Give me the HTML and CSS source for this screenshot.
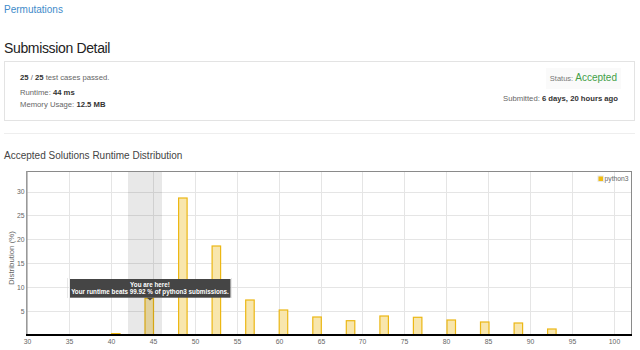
FILE: index.html
```html
<!DOCTYPE html>
<html lang="en">
<head>
    <meta charset="UTF-8">
    <title>Submission Detail - Permutations</title>
    <link rel="stylesheet" href="styles.css">
</head>
<body>
    <div class="crumb"><a href="#">Permutations</a></div>

    <h2 class="page-title">Submission Detail</h2>

    <div class="detail-card">
        <div class="detail-left">
            <p class="row"><strong>25</strong> / <strong>25</strong> test cases passed.</p>
            <p class="row spaced">Runtime: <strong>44 ms</strong></p>
            <p class="row">Memory Usage: <strong>12.5 MB</strong></p>
        </div>
        <div class="detail-right">
            <div class="status">Status: <span class="accepted">Accepted</span></div>
            <p class="row submitted">Submitted: <strong>6 days, 20 hours ago</strong></p>
        </div>
    </div>

    <div class="dist">
        <h3 class="dist-title">Accepted Solutions Runtime Distribution</h3>

        <svg class="chart" width="640" height="190" viewBox="0 161 640 190">
            <!-- grid -->
            <g class="grid">
                <line x1="27" x2="632" y1="192.5" y2="192.5"/>
                <line x1="27" x2="632" y1="215.5" y2="215.5"/>
                <line x1="27" x2="632" y1="239.5" y2="239.5"/>
                <line x1="27" x2="632" y1="263.5" y2="263.5"/>
                <line x1="27" x2="632" y1="287.5" y2="287.5"/>
                <line x1="27" x2="632" y1="311.5" y2="311.5"/>
                <line x1="69.5" x2="69.5" y1="171" y2="335"/>
                <line x1="111.5" x2="111.5" y1="171" y2="335"/>
                <line x1="153.5" x2="153.5" y1="171" y2="335"/>
                <line x1="195.5" x2="195.5" y1="171" y2="335"/>
                <line x1="237.5" x2="237.5" y1="171" y2="335"/>
                <line x1="279.5" x2="279.5" y1="171" y2="335"/>
                <line x1="321.5" x2="321.5" y1="171" y2="335"/>
                <line x1="362.5" x2="362.5" y1="171" y2="335"/>
                <line x1="404.5" x2="404.5" y1="171" y2="335"/>
                <line x1="446.5" x2="446.5" y1="171" y2="335"/>
                <line x1="488.5" x2="488.5" y1="171" y2="335"/>
                <line x1="530.5" x2="530.5" y1="171" y2="335"/>
                <line x1="572.5" x2="572.5" y1="171" y2="335"/>
                <line x1="614.5" x2="614.5" y1="171" y2="335"/>
            </g>

            <!-- bars -->
            <g class="bars">
                <rect x="111.5" y="333.6" width="8.5" height="1.4"/>
                <rect x="145" y="298.3" width="8.5" height="36.7"/>
                <rect x="178.6" y="198" width="8.5" height="137"/>
                <rect x="212.1" y="246" width="8.5" height="89"/>
                <rect x="245.7" y="300" width="8.5" height="35"/>
                <rect x="279.2" y="310" width="8.5" height="25"/>
                <rect x="312.8" y="317" width="8.5" height="18"/>
                <rect x="346.3" y="320.7" width="8.5" height="14.3"/>
                <rect x="379.9" y="316" width="8.5" height="19"/>
                <rect x="413.4" y="317.3" width="8.5" height="17.7"/>
                <rect x="447" y="320" width="8.5" height="15"/>
                <rect x="480.5" y="322" width="8.5" height="13"/>
                <rect x="514.1" y="323" width="8.5" height="12"/>
                <rect x="547.6" y="329" width="8.5" height="6"/>
            </g>

            <!-- your runtime band -->
            <rect class="band" x="128" y="171" width="34" height="164"/>

            <!-- frame -->
            <line class="frame" x1="27" x2="632" y1="171.5" y2="171.5"/>
            <line class="frame" x1="631.5" x2="631.5" y1="171" y2="335"/>
            <line class="frame-left" x1="26.8" x2="26.8" y1="171" y2="335"/>
            <line class="axis" x1="26" x2="632" y1="335" y2="335"/>

            <!-- y labels -->
            <g class="tick y-tick">
                <text x="24.5" y="194.4">30</text>
                <text x="24.5" y="218">25</text>
                <text x="24.5" y="241.8">20</text>
                <text x="24.5" y="265.7">15</text>
                <text x="24.5" y="289.6">10</text>
                <text x="24.5" y="313.6">5</text>
            </g>
            <text class="y-title" transform="translate(13.5 258) rotate(-90)">Distribution (%)</text>

            <!-- x labels -->
            <g class="tick x-tick">
                <text x="27.5" y="343.5">30</text>
                <text x="69.5" y="343.5">35</text>
                <text x="111.5" y="343.5">40</text>
                <text x="153.5" y="343.5">45</text>
                <text x="195.5" y="343.5">50</text>
                <text x="237.5" y="343.5">55</text>
                <text x="279.5" y="343.5">60</text>
                <text x="321.5" y="343.5">65</text>
                <text x="362.5" y="343.5">70</text>
                <text x="404.5" y="343.5">75</text>
                <text x="446.5" y="343.5">80</text>
                <text x="488.5" y="343.5">85</text>
                <text x="530.5" y="343.5">90</text>
                <text x="572.5" y="343.5">95</text>
                <text x="614.5" y="343.5">100</text>
            </g>

            <!-- legend -->
            <rect class="legend-box" x="597.5" y="175.5" width="6.5" height="6.5"/>
            <rect class="legend-swatch" x="598.5" y="176.5" width="4.5" height="4.5"/>
            <text class="legend-text" x="604.5" y="181">python3</text>

            <!-- tooltip -->
            <line class="tip-edge" x1="67.5" x2="67.5" y1="278" y2="298"/>
            <line class="tip-edge" x1="231.5" x2="231.5" y1="278" y2="298"/>
            <rect class="tip" x="70" y="279" width="160.5" height="18.7"/>
            <polygon class="tip" points="147,297.7 153,297.7 150,300.6"/>
            <text class="tip-text" x="150" y="286.6">You are here!</text>
            <text class="tip-text" x="150" y="294">Your runtime beats 99.92 % of python3 submissions.</text>
        </svg>
    </div>
</body>
</html>
```

FILE: styles.css
```css
:root {
    --link: #428bca;
    --green: #43a047;
    --text: #333;
    --muted: #666;
    --line: #e5e5e5;
    --bar: #ecb714;
}

* {
    margin: 0;
    padding: 0;
    box-sizing: border-box;
}

body {
    font-family: 'Liberation Sans', Arial, sans-serif;
    color: var(--text);
    background: #fff;
    padding: 3px 5px 0 4px;
    overflow: hidden;
}

.crumb {
    font-size: 10px;
    line-height: 14px;
}

.crumb a {
    color: var(--link);
    text-decoration: none;
}

.page-title {
    font-size: 14px;
    font-weight: 400;
    letter-spacing: -0.35px;
    line-height: 18px;
    color: #222;
    margin-top: 22px;
    margin-bottom: 4px;
}

.detail-card {
    display: flex;
    justify-content: space-between;
    border: 1px solid #e3e3e3;
    height: 60px;
    padding: 6px 13px 0 15px;
    font-size: 7.7px;
    color: var(--muted);
}

.detail-left {
    padding-top: 4px;
}

.row {
    line-height: 12px;
}

.row strong {
    color: var(--text);
}

.spaced {
    margin-top: 3px;
}

.detail-right {
    display: flex;
    flex-direction: column;
    align-items: flex-end;
}

.status {
    background: #fafafa;
    padding: 3px 4px;
    line-height: 14px;
    font-size: 7.5px;
    color: #777;
}

.accepted {
    color: var(--green);
    font-size: 10px;
}

.submitted {
    margin-top: 4px;
    margin-right: 3px;
}

.dist {
    margin-top: 12px;
    border-top: 1px solid #eee;
}

.dist-title {
    font-size: 10px;
    font-weight: 400;
    line-height: 14px;
    color: #444;
    margin-top: 15px;
}

.chart {
    display: block;
    margin-top: -2px;
    margin-left: -4px;
    font-family: 'Liberation Sans', Arial, sans-serif;
}

.grid line {
    stroke: var(--line);
    stroke-width: 1;
}

.bars rect {
    fill: #f8e6ad;
    stroke: var(--bar);
    stroke-width: 1.2;
}

.band {
    fill: rgba(0, 0, 0, 0.09);
}

.frame {
    stroke: #8a8a8a;
    stroke-width: 1;
}

.frame-left {
    stroke: #999;
    stroke-width: 1.6;
}

.axis {
    stroke: #000;
    stroke-width: 2;
}

.tick text {
    font-size: 6.8px;
    fill: var(--muted);
}

.y-tick text {
    text-anchor: end;
}

.x-tick text {
    text-anchor: middle;
}

.y-title {
    font-size: 7.9px;
    fill: var(--muted);
    text-anchor: middle;
}

.legend-box {
    fill: #e8e8e8;
}

.legend-swatch {
    fill: #f0bc12;
}

.legend-text {
    font-size: 6.75px;
    fill: var(--muted);
}

.tip {
    fill: #454545;
}

.tip-edge {
    stroke: #d8d8d8;
    stroke-width: 0.6;
}

.tip-text {
    font-size: 6.3px;
    font-weight: 700;
    fill: #fff;
    text-anchor: middle;
}
```
